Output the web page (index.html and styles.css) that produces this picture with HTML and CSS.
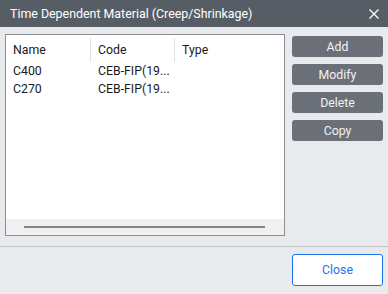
FILE: index.html
```html
<!DOCTYPE html>
<html lang="en">
<head>
    <meta charset="UTF-8">
    <title>Time Dependent Material</title>
    <link rel="stylesheet" href="styles.css">
</head>
<body>
    <div class="dialog">
        <div class="titlebar">
            <span class="title">Time Dependent Material (Creep/Shrinkage)</span>
            <svg class="close-x" width="10" height="10" viewBox="0 0 10 10">
                <path d="M0.5 0.5 L9.5 9.5 M9.5 0.5 L0.5 9.5" stroke="#ffffff" stroke-width="1.3" fill="none"/>
            </svg>
        </div>

        <div class="content">
            <div class="list">
                <div class="list-body">
                    <div class="row head">
                        <div class="cell"><span>Name</span></div>
                        <div class="cell"><span>Code</span></div>
                        <div class="cell last"><span>Type</span></div>
                    </div>
                    <div class="row">
                        <div class="cell">C400</div>
                        <div class="cell">CEB-FIP(19...</div>
                        <div class="cell last"></div>
                    </div>
                    <div class="row">
                        <div class="cell">C270</div>
                        <div class="cell">CEB-FIP(19...</div>
                        <div class="cell last"></div>
                    </div>
                </div>
                <div class="hscroll"><div class="thumb"></div></div>
            </div>

            <div class="side">
                <button class="btn">Add</button>
                <button class="btn">Modify</button>
                <button class="btn">Delete</button>
                <button class="btn">Copy</button>
            </div>
        </div>

        <div class="footer">
            <button class="btn-close">Close</button>
        </div>
    </div>
</body>
</html>
```

FILE: styles.css
```css
body {
    margin: 0;
    background: #e9eaed;
    font-family: Roboto, "Noto Sans", sans-serif;
    font-size: 12.3px;
    color: #1a1a1a;
}

.dialog {
    width: 388px;
    height: 294px;
    background: #e9eaed;
    display: flex;
    flex-direction: column;
}

.titlebar {
    height: 27px;
    background: #575d65;
    color: #ffffff;
    display: flex;
    align-items: center;
    justify-content: space-between;
    padding: 0 9px 0 10px;
    flex-shrink: 0;
}

.title {
    font-size: 12.4px;
}

.close-x {
    display: block;
}

.content {
    display: flex;
    padding: 7px 5px 0 5px;
    gap: 7px;
}

.list {
    width: 278px;
    height: 200px;
    border: 1px solid #8c8f94;
    background: #ffffff;
    display: flex;
    flex-direction: column;
}

.list-body {
    flex: 1;
}

.row {
    display: grid;
    grid-template-columns: 85px 84px 1fr;
    height: 18px;
    align-items: center;
}

.row.head {
    height: 27px;
}

.cell {
    padding: 0 0 0 7px;
    white-space: nowrap;
}

.head .cell {
    height: 24px;
    line-height: 24px;
    border-right: 1px solid #e0e0e0;
    margin-top: 2px;
}

.head .cell.last {
    border-right: none;
}

.hscroll {
    height: 16px;
    background: #f0f0f0;
    display: flex;
    align-items: center;
    padding: 0 19px 0 18px;
}

.thumb {
    flex: 1;
    height: 2px;
    background: #858585;
}

.side {
    display: flex;
    flex-direction: column;
    gap: 7px;
    padding-top: 2px;
}

.btn {
    width: 91px;
    height: 21px;
    border: none;
    border-radius: 3px;
    background: #6b7078;
    color: #f2f2f2;
    font-family: Roboto, "Noto Sans", sans-serif;
    font-size: 12.3px;
    padding: 0;
}

.footer {
    margin-top: 10px;
    border-top: 1px solid #c3c7cb;
    display: flex;
    justify-content: flex-end;
    padding: 7px 5px 0 0;
}

.btn-close {
    width: 91px;
    height: 32px;
    border: 1px solid #1a73e8;
    border-radius: 3px;
    background: #ffffff;
    color: #1a73e8;
    font-family: Roboto, "Noto Sans", sans-serif;
    font-size: 12.3px;
    padding: 0;
}
```
